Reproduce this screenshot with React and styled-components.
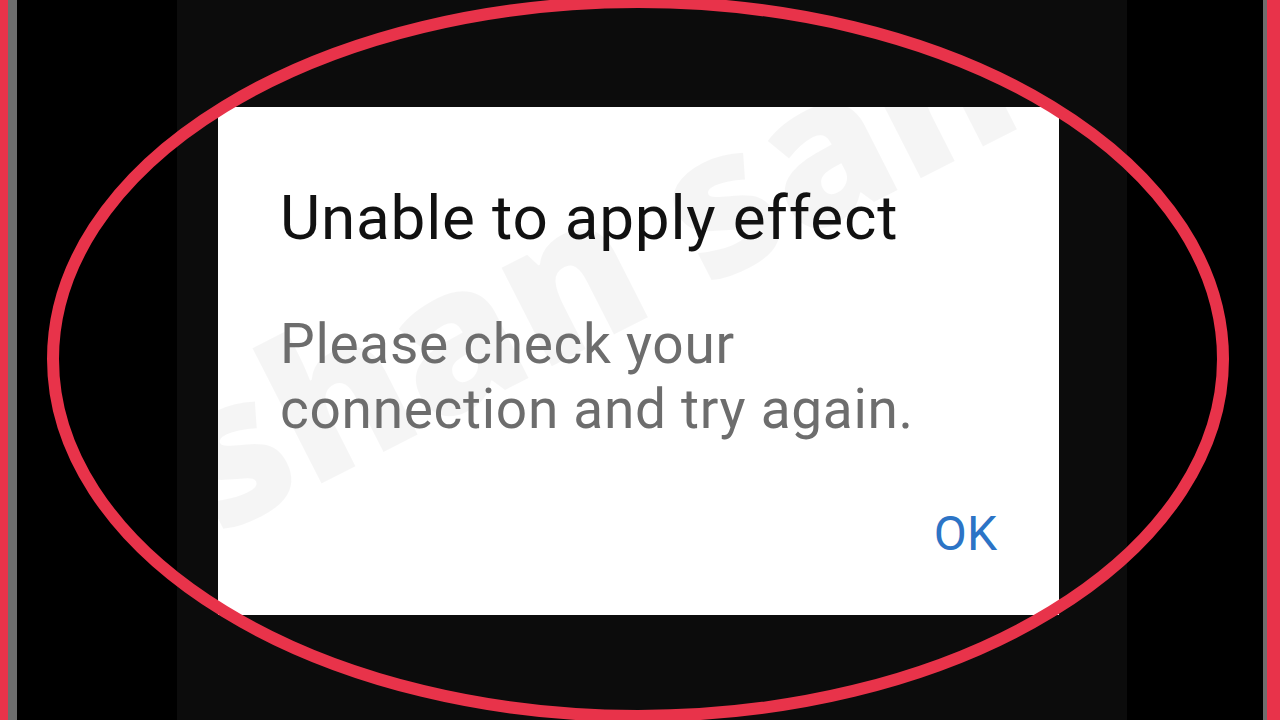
import React from "react";
import styled, { createGlobalStyle } from "styled-components";

const GlobalStyle = createGlobalStyle`
  html, body {
    margin: 0;
    padding: 0;
    background: #000;
    overflow: hidden;
  }
`;

const Screen = styled.div`
  position: relative;
  width: 1280px;
  height: 720px;
  display: flex;
  background: #000;
  font-family: Roboto, "Noto Sans", sans-serif;
  overflow: hidden;
`;

const Edge = styled.div`
  flex: 0 0 ${(p) => p.width}px;
  background: ${(p) => p.color};
`;

const Side = styled.div`
  flex: 0 0 ${(p) => p.width}px;
  background: #000;
`;

const Panel = styled.div`
  flex: 0 0 950px;
  background: #0c0c0c;
  padding: 107px 68px 0 41px;
  box-sizing: border-box;
`;

const Dialog = styled.div`
  position: relative;
  width: 841px;
  height: 508px;
  background: #fff;
  box-sizing: border-box;
  padding: 0 62px;
  display: flex;
  flex-direction: column;
  overflow: hidden;
`;

const Watermark = styled.div`
  position: absolute;
  left: 10px;
  top: 250px;
  font-family: "Open Sans", sans-serif;
  font-weight: 800;
  font-size: 200px;
  line-height: 200px;
  color: rgba(0, 0, 0, 0.04);
  white-space: nowrap;
  transform: rotate(-27deg);
  transform-origin: left bottom;
  pointer-events: none;
`;

const Title = styled.h1`
  position: relative;
  margin: 76px 0 0;
  font-weight: 400;
  font-size: 62px;
  line-height: 70px;
  color: #111;
  letter-spacing: 0.8px;
`;

const Message = styled.p`
  position: relative;
  margin: 59px 0 0;
  font-size: 55px;
  line-height: 65px;
  color: #6d6d6d;
  letter-spacing: 0.7px;
`;

const Actions = styled.div`
  position: relative;
  display: flex;
  justify-content: flex-end;
  margin-top: 64px;
`;

const OkButton = styled.button`
  border: none;
  background: none;
  padding: 0;
  font-family: Roboto, sans-serif;
  font-size: 48px;
  line-height: 56px;
  color: #2c74c6;
  cursor: pointer;
`;

const Ring = styled.svg`
  position: absolute;
  left: 0;
  top: 0;
  pointer-events: none;
`;

export default function App() {
  return (
    <>
      <GlobalStyle />
      <Screen>
        <Edge width={8} color="#e8334a" />
        <Edge width={9} color="#6e6e6e" />
        <Side width={160} />
        <Panel>
          <Dialog>
            <Watermark>shan san</Watermark>
            <Title>Unable to apply effect</Title>
            <Message>
              Please check your
              <br />
              connection and try again.
            </Message>
            <Actions>
              <OkButton>OK</OkButton>
            </Actions>
          </Dialog>
        </Panel>
        <Side width={136} />
        <Edge width={4} color="#6e6e6e" />
        <Edge width={13} color="#e8334a" />
        <Ring width="1280" height="720" viewBox="0 0 1280 720">
          <ellipse
            cx="638"
            cy="359"
            rx="585"
            ry="357"
            fill="none"
            stroke="#e8334a"
            strokeWidth="12"
          />
        </Ring>
      </Screen>
    </>
  );
}
